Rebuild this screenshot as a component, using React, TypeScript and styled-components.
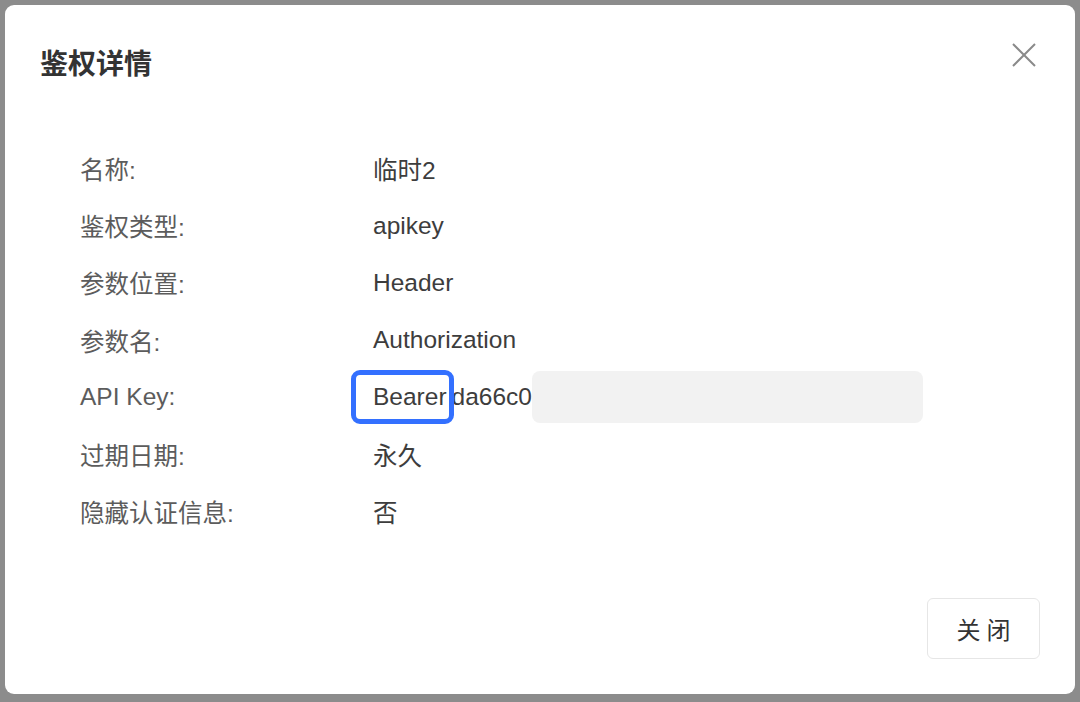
import * as React from 'react';
import styled, { createGlobalStyle } from 'styled-components';

const GlobalStyle = createGlobalStyle`
  html, body {
    margin: 0;
    padding: 0;
    background: #8c8c8c;
  }
  body {
    font-family: "Noto Sans", "Noto Sans CJK SC", sans-serif;
  }
  * {
    box-sizing: border-box;
  }
`;

const Overlay = styled.div`
  width: 1080px;
  height: 702px;
  padding: 5px 5px 8px 5px;
  background: #8c8c8c;
`;

const Dialog = styled.div`
  display: flex;
  flex-direction: column;
  height: 689px;
  background: #fff;
  border-radius: 9px;
  overflow: hidden;
`;

const Header = styled.div`
  display: flex;
  justify-content: space-between;
  align-items: flex-start;
  padding: 41px 35px 0 35px;
`;

const Title = styled.h2`
  margin: 0;
  font-size: 28px;
  line-height: 34px;
  font-weight: 700;
  color: #333;
`;

const CloseIcon = styled.button`
  width: 28px;
  height: 28px;
  margin: -5px 2px 0 0;
  padding: 0;
  border: none;
  background: transparent;
  cursor: pointer;
  display: flex;
  align-items: center;
  justify-content: center;
`;

const Body = styled.div`
  flex: 1;
  padding: 60px 35px 0 75px;
`;

const Row = styled.div`
  display: grid;
  grid-template-columns: 293px 1fr;
  align-items: center;
  height: 57.2px;
  font-family: "Liberation Sans", "Noto Sans CJK SC", sans-serif;
  font-size: 24.5px;
`;

const Label = styled.div`
  color: #5c5c5c;
`;

const Value = styled.div`
  display: flex;
  align-items: center;
  color: #3d3d3d;
`;

const Highlight = styled.span`
  position: relative;
  margin-right: 5px;

  &::after {
    content: '';
    position: absolute;
    left: -22px;
    right: -7px;
    top: -13px;
    bottom: -13px;
    border: 5px solid #3370ff;
    border-radius: 9px;
  }
`;

const Redacted = styled.span`
  display: inline-block;
  width: 391px;
  height: 52px;
  margin-left: 0;
  background: #f2f2f2;
  border-radius: 8px;
`;

const Footer = styled.div`
  display: flex;
  justify-content: flex-end;
  padding: 0 35px 35px 0;
`;

const Button = styled.button`
  width: 113px;
  height: 61px;
  border: 1px solid #e6e6e6;
  border-radius: 6px;
  background: #fff;
  color: #333;
  font-family: "Noto Sans", "Noto Sans CJK SC", sans-serif;
  font-size: 24px;
  letter-spacing: 6px;
  padding-left: 12px;
  cursor: pointer;
`;

const rows: [string, React.ReactNode][] = [
  ['名称:', '临时2'],
  ['鉴权类型:', 'apikey'],
  ['参数位置:', 'Header'],
  ['参数名:', 'Authorization'],
  [
    'API Key:',
    <>
      <Highlight>Bearer</Highlight>da66c0<Redacted />
    </>,
  ],
  ['过期日期:', '永久'],
  ['隐藏认证信息:', '否'],
];

export default function App() {
  return (
    <>
      <GlobalStyle />
      <Overlay>
        <Dialog>
          <Header>
            <Title>鉴权详情</Title>
            <CloseIcon aria-label="close">
              <svg width="26" height="26" viewBox="0 0 26 26">
                <path d="M2 2 L24 24 M24 2 L2 24" stroke="#8a8a8a" strokeWidth="2" fill="none" />
              </svg>
            </CloseIcon>
          </Header>
          <Body>
            {rows.map(([label, value]) => (
              <Row key={label}>
                <Label>{label}</Label>
                <Value>{value}</Value>
              </Row>
            ))}
          </Body>
          <Footer>
            <Button>关闭</Button>
          </Footer>
        </Dialog>
      </Overlay>
    </>
  );
}
